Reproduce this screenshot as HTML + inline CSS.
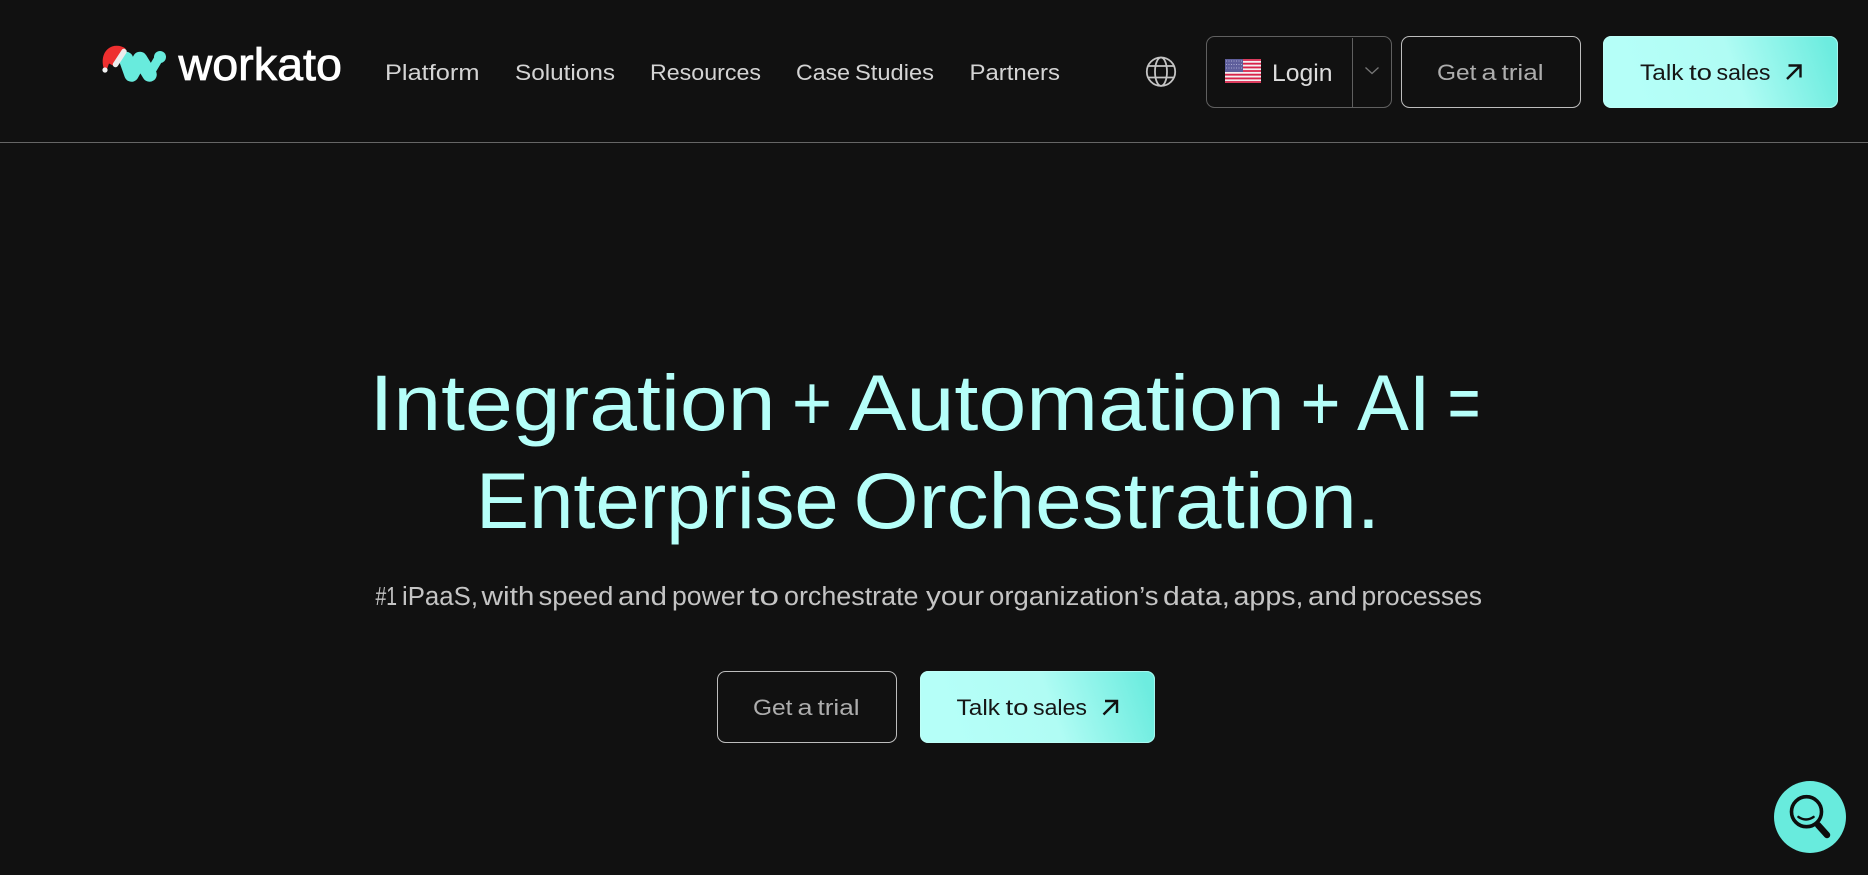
<!DOCTYPE html>
<html lang="en"><head><meta charset="utf-8"><title>Workato</title>
<style>
html,body{margin:0;padding:0;width:1868px;height:875px;overflow:hidden;background:#111}
svg{display:block;position:absolute;left:0;top:0}
text{font-family:"Liberation Sans",sans-serif;white-space:pre}
</style></head><body>
<svg width="1868" height="875" viewBox="0 0 1868 875" xmlns="http://www.w3.org/2000/svg">
<defs>
<linearGradient id="g1" gradientUnits="userSpaceOnUse" x1="1640" y1="100" x2="1825" y2="36"><stop offset="0" stop-color="#b5fff8"/><stop offset=".5" stop-color="#b0fcf4"/><stop offset="1" stop-color="#6decdf"/></linearGradient>
<linearGradient id="g2" gradientUnits="userSpaceOnUse" x1="957" y1="735" x2="1142" y2="671"><stop offset="0" stop-color="#b5fff8"/><stop offset=".5" stop-color="#b0fcf4"/><stop offset="1" stop-color="#6decdf"/></linearGradient>
<clipPath id="fc"><rect x="1225" y="59" width="36" height="24"/></clipPath>
</defs>
<rect width="1868" height="875" fill="#111"/>

<!-- logo -->
<g fill="none" stroke="#68ebdd" stroke-linecap="round" stroke-linejoin="round">
<path d="M126 59L131.5 74.5L140 59L149.5 74.5" stroke-width="14.5"/>
<path d="M150 73L159.5 57" stroke-width="9"/>
</g>
<circle cx="160" cy="57" r="6" fill="#68ebdd"/>
<path d="M104 69C101 60 103 50 112 46.5C117 45 122 46 125.5 48.500L115 66.5L109 63.500L107 69Z" fill="#ee2f2f"/>
<path d="M124 51.500L115.5 64.500" stroke="#ececec" stroke-width="5.5" stroke-linecap="round"/>
<circle cx="105" cy="70" r="2.6" fill="#f2f2f2"/>
<text x="178.5" y="80" font-size="45" textLength="163.5" lengthAdjust="spacingAndGlyphs" fill="#fff" stroke="#fff" stroke-width=".8">workato</text>

<!-- nav -->
<g font-size="22.5" fill="#d4d4d4">
<text x="385" y="80" textLength="94.5" lengthAdjust="spacingAndGlyphs">Platform</text>
<text x="515" y="80" textLength="100" lengthAdjust="spacingAndGlyphs">Solutions</text>
<text x="650" y="80" textLength="111" lengthAdjust="spacingAndGlyphs">Resources</text>
<text x="796" y="80" textLength="54" lengthAdjust="spacingAndGlyphs">Case</text>
<text x="855" y="80" textLength="79" lengthAdjust="spacingAndGlyphs">Studies</text>
<text x="969.5" y="80" textLength="90.5" lengthAdjust="spacingAndGlyphs">Partners</text>
</g>

<!-- globe -->
<g fill="none" stroke="#c4c4c4" stroke-width="1.8">
<circle cx="1161" cy="71.7" r="14.2"/>
<ellipse cx="1161" cy="71.7" rx="6" ry="14.2"/>
<path d="M1148.5 66H1173.5M1148.5 77.5H1173.5"/>
</g>

<!-- login -->
<rect x="1206.5" y="36.5" width="185" height="71" rx="8" fill="none" stroke="#606060"/>
<rect x="1352" y="38" width="1" height="69" fill="#606060"/>
<g clip-path="url(#fc)">
<rect x="1225" y="59" width="36" height="24" fill="#f4f0f2"/>
<path d="M1225 60h36M1225 63.7h36M1225 67.4h36M1225 71h36M1225 74.7h36M1225 78.4h36M1225 82h36" stroke="#d8234a" stroke-width="1.85"/>
<rect x="1225" y="59" width="18" height="13" fill="#5f5f9c"/>
<path d="M1226 61h16M1226 64.5h16M1226 68h16" stroke="#a9a9cf" stroke-width="1" stroke-dasharray="1 1.5"/>
</g>
<text x="1272" y="81" font-size="24.5" textLength="60.5" lengthAdjust="spacingAndGlyphs" fill="#ddd">Login</text>
<path d="M1365.5 67.5L1372 73.5L1378.5 67.5" fill="none" stroke="#777" stroke-width="1.3"/>

<!-- header buttons -->
<rect x="1401.5" y="36.5" width="179" height="71" rx="8" fill="none" stroke="#bdbdbd"/>
<g font-size="22.5" fill="#adadad">
<text x="1437" y="80" textLength="39.5" lengthAdjust="spacingAndGlyphs">Get</text>
<text x="1481.5" y="80" textLength="15" lengthAdjust="spacingAndGlyphs">a</text>
<text x="1501.5" y="80" textLength="42" lengthAdjust="spacingAndGlyphs">trial</text>
</g>
<rect x="1603" y="36" width="235" height="72" rx="8" fill="url(#g1)"/>
<rect x="1603.5" y="36.5" width="234" height="71" rx="8" fill="none" stroke="#c6fff9" stroke-opacity=".6"/>
<g font-size="22.5" fill="#161616">
<text x="1640" y="80" textLength="43.5" lengthAdjust="spacingAndGlyphs">Talk</text>
<text x="1689" y="80" textLength="23" lengthAdjust="spacingAndGlyphs">to</text>
<text x="1716.5" y="80" textLength="54" lengthAdjust="spacingAndGlyphs">sales</text>
</g>
<path d="M1787 79L1800.5 65.5M1788.5 65.5H1800.5V77.5" fill="none" stroke="#111" stroke-width="2.4"/>
<rect x="0" y="142" width="1868" height="1" fill="#666"/>

<!-- hero -->
<g font-size="79" fill="#b5fff9">
<text x="369.5" y="430" textLength="406" lengthAdjust="spacingAndGlyphs">Integration</text>
<text x="792" y="430" textLength="40" lengthAdjust="spacingAndGlyphs">+</text>
<text x="849" y="430" textLength="436" lengthAdjust="spacingAndGlyphs">Automation</text>
<text x="1300.5" y="430" textLength="40" lengthAdjust="spacingAndGlyphs">+</text>
<text x="1357" y="430" textLength="73.5" lengthAdjust="spacingAndGlyphs">AI</text>
<text x="1447.7" y="430" textLength="32.6" lengthAdjust="spacingAndGlyphs">=</text>
<text x="476" y="528" textLength="362.7" lengthAdjust="spacingAndGlyphs">Enterprise</text>
<text x="853.5" y="528" textLength="526.5" lengthAdjust="spacingAndGlyphs">Orchestration.</text>
</g>
<g font-size="25.5" fill="#c4c4c4">
<text x="375.5" y="605" textLength="21.5" lengthAdjust="spacingAndGlyphs">#1</text>
<text x="402" y="605" textLength="76" lengthAdjust="spacingAndGlyphs">iPaaS,</text>
<text x="481.5" y="605" textLength="53" lengthAdjust="spacingAndGlyphs">with</text>
<text x="538.5" y="605" textLength="75" lengthAdjust="spacingAndGlyphs">speed</text>
<text x="618" y="605" textLength="49" lengthAdjust="spacingAndGlyphs">and</text>
<text x="672" y="605" textLength="72.5" lengthAdjust="spacingAndGlyphs">power</text>
<text x="749.5" y="605" textLength="29.5" lengthAdjust="spacingAndGlyphs">to</text>
<text x="784" y="605" textLength="134.5" lengthAdjust="spacingAndGlyphs">orchestrate</text>
<text x="926" y="605" textLength="58" lengthAdjust="spacingAndGlyphs">your</text>
<text x="989" y="605" textLength="169.5" lengthAdjust="spacingAndGlyphs">organization’s</text>
<text x="1163" y="605" textLength="67" lengthAdjust="spacingAndGlyphs">data,</text>
<text x="1233.5" y="605" textLength="70" lengthAdjust="spacingAndGlyphs">apps,</text>
<text x="1308" y="605" textLength="49" lengthAdjust="spacingAndGlyphs">and</text>
<text x="1361.5" y="605" textLength="120.5" lengthAdjust="spacingAndGlyphs">processes</text>
</g>

<!-- hero buttons -->
<rect x="717.5" y="671.5" width="179" height="71" rx="8" fill="none" stroke="#bdbdbd"/>
<g font-size="22.5" fill="#adadad">
<text x="753" y="715" textLength="39.5" lengthAdjust="spacingAndGlyphs">Get</text>
<text x="797.5" y="715" textLength="15" lengthAdjust="spacingAndGlyphs">a</text>
<text x="817.5" y="715" textLength="42" lengthAdjust="spacingAndGlyphs">trial</text>
</g>
<rect x="920" y="671" width="235" height="72" rx="8" fill="url(#g2)"/>
<rect x="920.5" y="671.5" width="234" height="71" rx="8" fill="none" stroke="#c6fff9" stroke-opacity=".6"/>
<g font-size="22.5" fill="#161616">
<text x="956.5" y="715" textLength="43.5" lengthAdjust="spacingAndGlyphs">Talk</text>
<text x="1005.5" y="715" textLength="23" lengthAdjust="spacingAndGlyphs">to</text>
<text x="1033" y="715" textLength="54" lengthAdjust="spacingAndGlyphs">sales</text>
</g>
<path d="M1103.5 714.5L1117 701M1105 701H1117V713" fill="none" stroke="#111" stroke-width="2.4"/>

<!-- chat widget -->
<circle cx="1810" cy="817" r="36" fill="#68ebdd"/>
<circle cx="1806.5" cy="811.7" r="15" fill="none" stroke="#0d0d0d" stroke-width="3.6"/>
<path d="M1798.5 817Q1806 822 1813.5 817" fill="none" stroke="#0d0d0d" stroke-width="2.5" stroke-linecap="round"/>
<path d="M1818 825L1827 835" stroke="#0d0d0d" stroke-width="6.5" stroke-linecap="round"/>
</svg>
</body></html>
